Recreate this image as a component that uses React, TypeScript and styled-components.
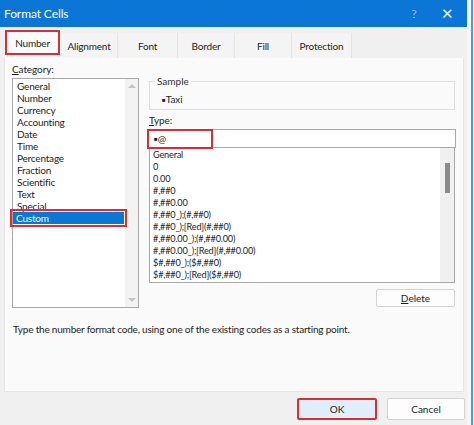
import React from "react";
import styled, { createGlobalStyle } from "styled-components";

const Global = createGlobalStyle`
  html, body { margin: 0; padding: 0; }
  body { font-family: "Lato", "Noto Sans", sans-serif; font-size: 10px; color: #1e1e1e; }
  * { box-sizing: border-box; }
`;

const Screen = styled.div`
  width: 474px;
  height: 425px;
  display: flex;
  background: #f4f4f4;
  overflow: hidden;
`;

const Dialog = styled.div`
  width: 467px;
  display: flex;
  flex-direction: column;
  background: #f0f0f0;
`;

const Edge = styled.div`
  flex: 1;
  background: #f6f6f6;
  border-right: 2px solid #4a9be0;
  margin-right: 1px;
`;

const TitleBar = styled.div`
  height: 27px;
  flex: none;
  display: flex;
  align-items: center;
  background: #0b76d6;
  color: #fff;
  padding-left: 4px;
  font-size: 12px;
  letter-spacing: -0.1px;
`;

const Title = styled.div`
  flex: 1;
`;

const TitleButton = styled.div<{ $w: number }>`
  width: ${(p) => p.$w}px;
  text-align: center;
  font-size: ${(p) => (p.$w > 30 ? 15 : 12)}px;
  font-weight: 300;
  color: #e8f1fb;
`;

const TabStrip = styled.div`
  height: 31px;
  flex: none;
  display: flex;
  align-items: flex-end;
  padding-left: 5px;
`;

const Tab = styled.div<{ $w: number; $active?: boolean }>`
  width: ${(p) => p.$w}px;
  height: ${(p) => (p.$active ? 28 : 25)}px;
  display: flex;
  align-items: center;
  justify-content: center;
  padding-bottom: ${(p) => (p.$active ? 3 : 0)}px;
  background: ${(p) => (p.$active ? "#fafafa" : "#f4f4f4")};
  border-right: 1px solid ${(p) => (p.$active ? "transparent" : "#e4e4e4")};
  font-size: 10px;
  letter-spacing: -0.2px;
  position: relative;
`;

const TabMark = styled.div`
  position: absolute;
  left: 0;
  top: 0;
  right: 0;
  height: 25px;
  border: 2px solid #d62f3a;
`;

const Panel = styled.div`
  flex: 1;
  margin: 0 3px 0 4px;
  background: #fafafa;
  border: 1px solid #e6e6e6;
  border-top: none;
  padding: 5px 8px 0 7px;
  display: flex;
  flex-direction: column;
`;

const Columns = styled.div`
  display: grid;
  grid-template-columns: 127px 306px;
  column-gap: 10px;
`;

const Column = styled.div`
  display: flex;
  flex-direction: column;
`;

const Label = styled.div<{ $top?: number }>`
  line-height: 12px;
  margin-top: ${(p) => p.$top ?? 0}px;
  margin-bottom: 3px;
  font-size: 10px;
  letter-spacing: -0.1px;
`;

const U = styled.span`
  text-decoration: underline;
  text-underline-offset: 1px;
`;

const ListBox = styled.div<{ $h: number; $open?: boolean }>`
  height: ${(p) => p.$h}px;
  border: 1px solid #a8a8a8;
  border-top: ${(p) => (p.$open ? "none" : "1px solid #a8a8a8")};
  background: #fff;
  display: flex;
`;

const Items = styled.div`
  flex: 1;
  padding-top: 1px;
  display: flex;
  flex-direction: column;
`;

const Item = styled.div<{ $pad: number; $sel?: boolean; $size: number }>`
  height: 12px;
  line-height: 12px;
  padding-left: ${(p) => p.$pad}px;
  font-size: ${(p) => p.$size}px;
  letter-spacing: -0.2px;
  white-space: nowrap;
  overflow: hidden;
  background: ${(p) => (p.$sel ? "#0a77d5" : "transparent")};
  color: ${(p) => (p.$sel ? "#fff" : "#1e1e1e")};
  outline: ${(p) => (p.$sel ? "2px solid #d62f3a" : "none")};
  outline-offset: 1px;
  position: relative;
  z-index: ${(p) => (p.$sel ? 1 : 0)};
  margin: 0 ${(p) => (p.$sel ? 1 : 0)}px 0 0;
`;

const ScrollTrack = styled.div`
  width: 13px;
  background: #f3f3f3;
  display: flex;
  flex-direction: column;
  align-items: center;
  justify-content: space-between;
  padding: 5px 0;
`;

const Arrow = styled.div<{ $down?: boolean }>`
  width: 0;
  height: 0;
  border-left: 4px solid transparent;
  border-right: 4px solid transparent;
  ${(p) =>
    p.$down
      ? "border-top: 4px solid #c4c4c4;"
      : "border-bottom: 4px solid #c4c4c4;"}
`;

const ThumbTrack = styled.div`
  width: 14px;
  background: #f0f0f0;
  display: flex;
  flex-direction: column;
  align-items: center;
`;

const Thumb = styled.div`
  width: 5px;
  height: 30px;
  margin-top: 15px;
  background: #8a8a8a;
`;

const SampleBox = styled.fieldset`
  margin: 12px 0 0 0;
  padding: 0 0 4px 12px;
  border: 1px solid #dedede;
  min-width: 0;
  height: 35px;
`;

const Legend = styled.legend`
  padding: 0 2px;
  margin-left: -7px;
  font-size: 10px;
  line-height: 12px;
  color: #333;
`;

const SampleText = styled.div`
  line-height: 12px;
  margin-top: 6px;
  font-size: 10px;
`;

const Dot = styled.span`
  font-size: 6px;
  vertical-align: 1px;
`;

const TypeInput = styled.div`
  height: 19px;
  margin-left: -2px;
  margin-right: -1px;
  border: 1px solid #a8a8a8;
  background: #fff;
  display: flex;
  align-items: center;
  padding-left: 6px;
  position: relative;
  font-size: 10px;
`;

const InputMark = styled.div`
  position: absolute;
  left: -1px;
  top: -1px;
  width: 66px;
  height: 20px;
  border: 2px solid #d62f3a;
`;

const Button = styled.div<{ $w: number; $h: number; $primary?: boolean }>`
  width: ${(p) => p.$w}px;
  height: ${(p) => p.$h}px;
  display: flex;
  align-items: center;
  justify-content: center;
  background: ${(p) => (p.$primary ? "#e1eefa" : "#fdfdfd")};
  border: ${(p) => (p.$primary ? "2px solid #d62f3a" : "1px solid #d3d3d3")};
  border-radius: 2px;
  font-size: 10px;
`;

const DeleteRow = styled.div`
  display: flex;
  justify-content: flex-end;
  margin-top: 6px;
`;

const Hint = styled.div`
  margin-top: 15px;
  margin-left: 1px;
  line-height: 12px;
  font-size: 10px;
  letter-spacing: -0.2px;
`;

const Footer = styled.div`
  height: 33px;
  flex: none;
  display: flex;
  align-items: center;
  justify-content: flex-end;
  gap: 10px;
  padding: 1px 2px 0 0;
`;

const categories = [
  "General",
  "Number",
  "Currency",
  "Accounting",
  "Date",
  "Time",
  "Percentage",
  "Fraction",
  "Scientific",
  "Text",
  "Special",
  "Custom",
];

const formats = [
  "General",
  "0",
  "0.00",
  "#,##0",
  "#,##0.00",
  "#,##0_);(#,##0)",
  "#,##0_);[Red](#,##0)",
  "#,##0.00_);(#,##0.00)",
  "#,##0.00_);[Red](#,##0.00)",
  "$#,##0_);($#,##0)",
  "$#,##0_);[Red]($#,##0)",
];

const tabs: [string, number][] = [
  ["Alignment", 57],
  ["Font", 60],
  ["Border", 57],
  ["Fill", 57],
  ["Protection", 60],
];

export default function App() {
  return (
    <>
      <Global />
      <Screen>
        <Dialog>
          <TitleBar>
            <Title>Format Cells</Title>
            <TitleButton $w={26}>?</TitleButton>
            <TitleButton $w={40}>✕</TitleButton>
          </TitleBar>
          <TabStrip>
            <Tab $w={56} $active>
              Number
              <TabMark />
            </Tab>
            {tabs.map(([t, w]) => (
              <Tab key={t} $w={w}>
                {t}
              </Tab>
            ))}
          </TabStrip>
          <Panel>
            <Columns>
              <Column>
                <Label>
                  <U>C</U>ategory:
                </Label>
                <ListBox $h={230}>
                  <Items>
                    {categories.map((c) => (
                      <Item
                        key={c}
                        $pad={c === "Custom" ? 3 : 4}
                        $sel={c === "Custom"}
                        $size={10}
                      >
                        {c}
                      </Item>
                    ))}
                  </Items>
                  <ScrollTrack>
                    <Arrow />
                    <Arrow $down />
                  </ScrollTrack>
                </ListBox>
              </Column>
              <Column>
                <SampleBox>
                  <Legend>Sample</Legend>
                  <SampleText>
                    <Dot>■</Dot>Taxi
                  </SampleText>
                </SampleBox>
                <Label $top={4}>
                  <U>T</U>ype:
                </Label>
                <TypeInput>
                  <Dot>■</Dot>@
                  <InputMark />
                </TypeInput>
                <ListBox $h={135} $open>
                  <Items>
                    {formats.map((f, i) => (
                      <Item key={i} $pad={3} $size={9.2}>
                        {f}
                      </Item>
                    ))}
                  </Items>
                  <ThumbTrack>
                    <Thumb />
                  </ThumbTrack>
                </ListBox>
                <DeleteRow>
                  <Button $w={79} $h={18}>
                    <span>
                      <U>D</U>elete
                    </span>
                  </Button>
                </DeleteRow>
              </Column>
            </Columns>
            <Hint>
              Type the number format code, using one of the existing codes as a
              starting point.
            </Hint>
          </Panel>
          <Footer>
            <Button $w={80} $h={22} $primary>
              OK
            </Button>
            <Button $w={78} $h={22}>
              Cancel
            </Button>
          </Footer>
        </Dialog>
        <Edge />
      </Screen>
    </>
  );
}
